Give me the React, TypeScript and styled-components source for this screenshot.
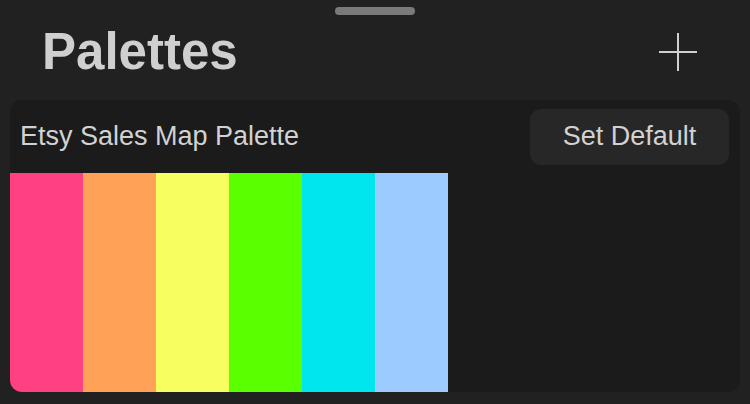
import React from 'react';
import styled, { createGlobalStyle } from 'styled-components';

const GlobalStyle = createGlobalStyle`
    html,
    body {
        margin: 0;
        padding: 0;
        background: #212121;
    }
`;

const Sheet = styled.div`
    width: 750px;
    height: 404px;
    box-sizing: border-box;
    background: #212121;
    font-family: 'Liberation Sans', Arial, sans-serif;
    color: #d0d0d0;
    display: flex;
    flex-direction: column;
    align-items: stretch;
    overflow: hidden;
`;

const Handle = styled.div`
    align-self: center;
    width: 80px;
    height: 8px;
    margin-top: 7px;
    border-radius: 4px;
    background: #7a7a7a;
`;

const TopBar = styled.div`
    display: flex;
    align-items: center;
    justify-content: space-between;
    margin-top: 11px;
    padding: 0 53px 0 42px;
`;

const Title = styled.h1`
    margin: 0;
    padding: 0;

    font-size: 51px;
    line-height: 51px;
    font-weight: 700;
    color: #cfcfcf;
`;

const AddButton = styled.button`
    margin: 0;
    padding: 0;

    width: 38px;
    height: 38px;
    border: none;
    background: none;
    display: flex;
    align-items: center;
    justify-content: center;
`;

const Card = styled.div`
    margin: 23px 10px 0;
    height: 292px;
    border-radius: 12px;
    background: #1b1b1b;
    overflow: hidden;
    display: flex;
    flex-direction: column;
`;

const CardHeader = styled.div`
    height: 73px;
    flex-shrink: 0;
    display: flex;
    align-items: center;
    justify-content: space-between;
    padding: 0 11px 0 10px;
`;

const PaletteName = styled.span`
    font-size: 27px;
    color: #d2d2d2;
`;

const DefaultButton = styled.button`
    margin: 0;

    width: 199px;
    height: 56px;
    border: none;
    border-radius: 11px;
    background: #272727;
    color: #d2d2d2;
    font-family: 'Liberation Sans', Arial, sans-serif;
    font-size: 27px;
    display: flex;
    align-items: center;
    justify-content: center;
`;

const Swatches = styled.div`
    display: flex;
    height: 219px;
`;

const Swatch = styled.div<{ color: string }>`
    width: 73px;
    height: 100%;
    background: ${(props) => props.color};
`;

const colors = ['#ff4083', '#ffa258', '#f7ff60', '#5aff00', '#00e6ef', '#9ccbff'];

const PlusIcon = (): JSX.Element => (
    <svg width="38" height="38" viewBox="0 0 38 38">
        <path d="M19 0V38M0 19H38" stroke="#d0d0d0" strokeWidth="2" fill="none" />
    </svg>
);

const App = (): JSX.Element => (
    <>
        <GlobalStyle />
        <Sheet>
            <Handle />
            <TopBar>
                <Title>Palettes</Title>
                <AddButton aria-label="Add palette">
                    <PlusIcon />
                </AddButton>
            </TopBar>
            <Card>
                <CardHeader>
                    <PaletteName>Etsy Sales Map Palette</PaletteName>
                    <DefaultButton>Set Default</DefaultButton>
                </CardHeader>
                <Swatches>
                    {colors.map((c) => (
                        <Swatch key={c} color={c} />
                    ))}
                </Swatches>
            </Card>
        </Sheet>
    </>
);

export default App;
